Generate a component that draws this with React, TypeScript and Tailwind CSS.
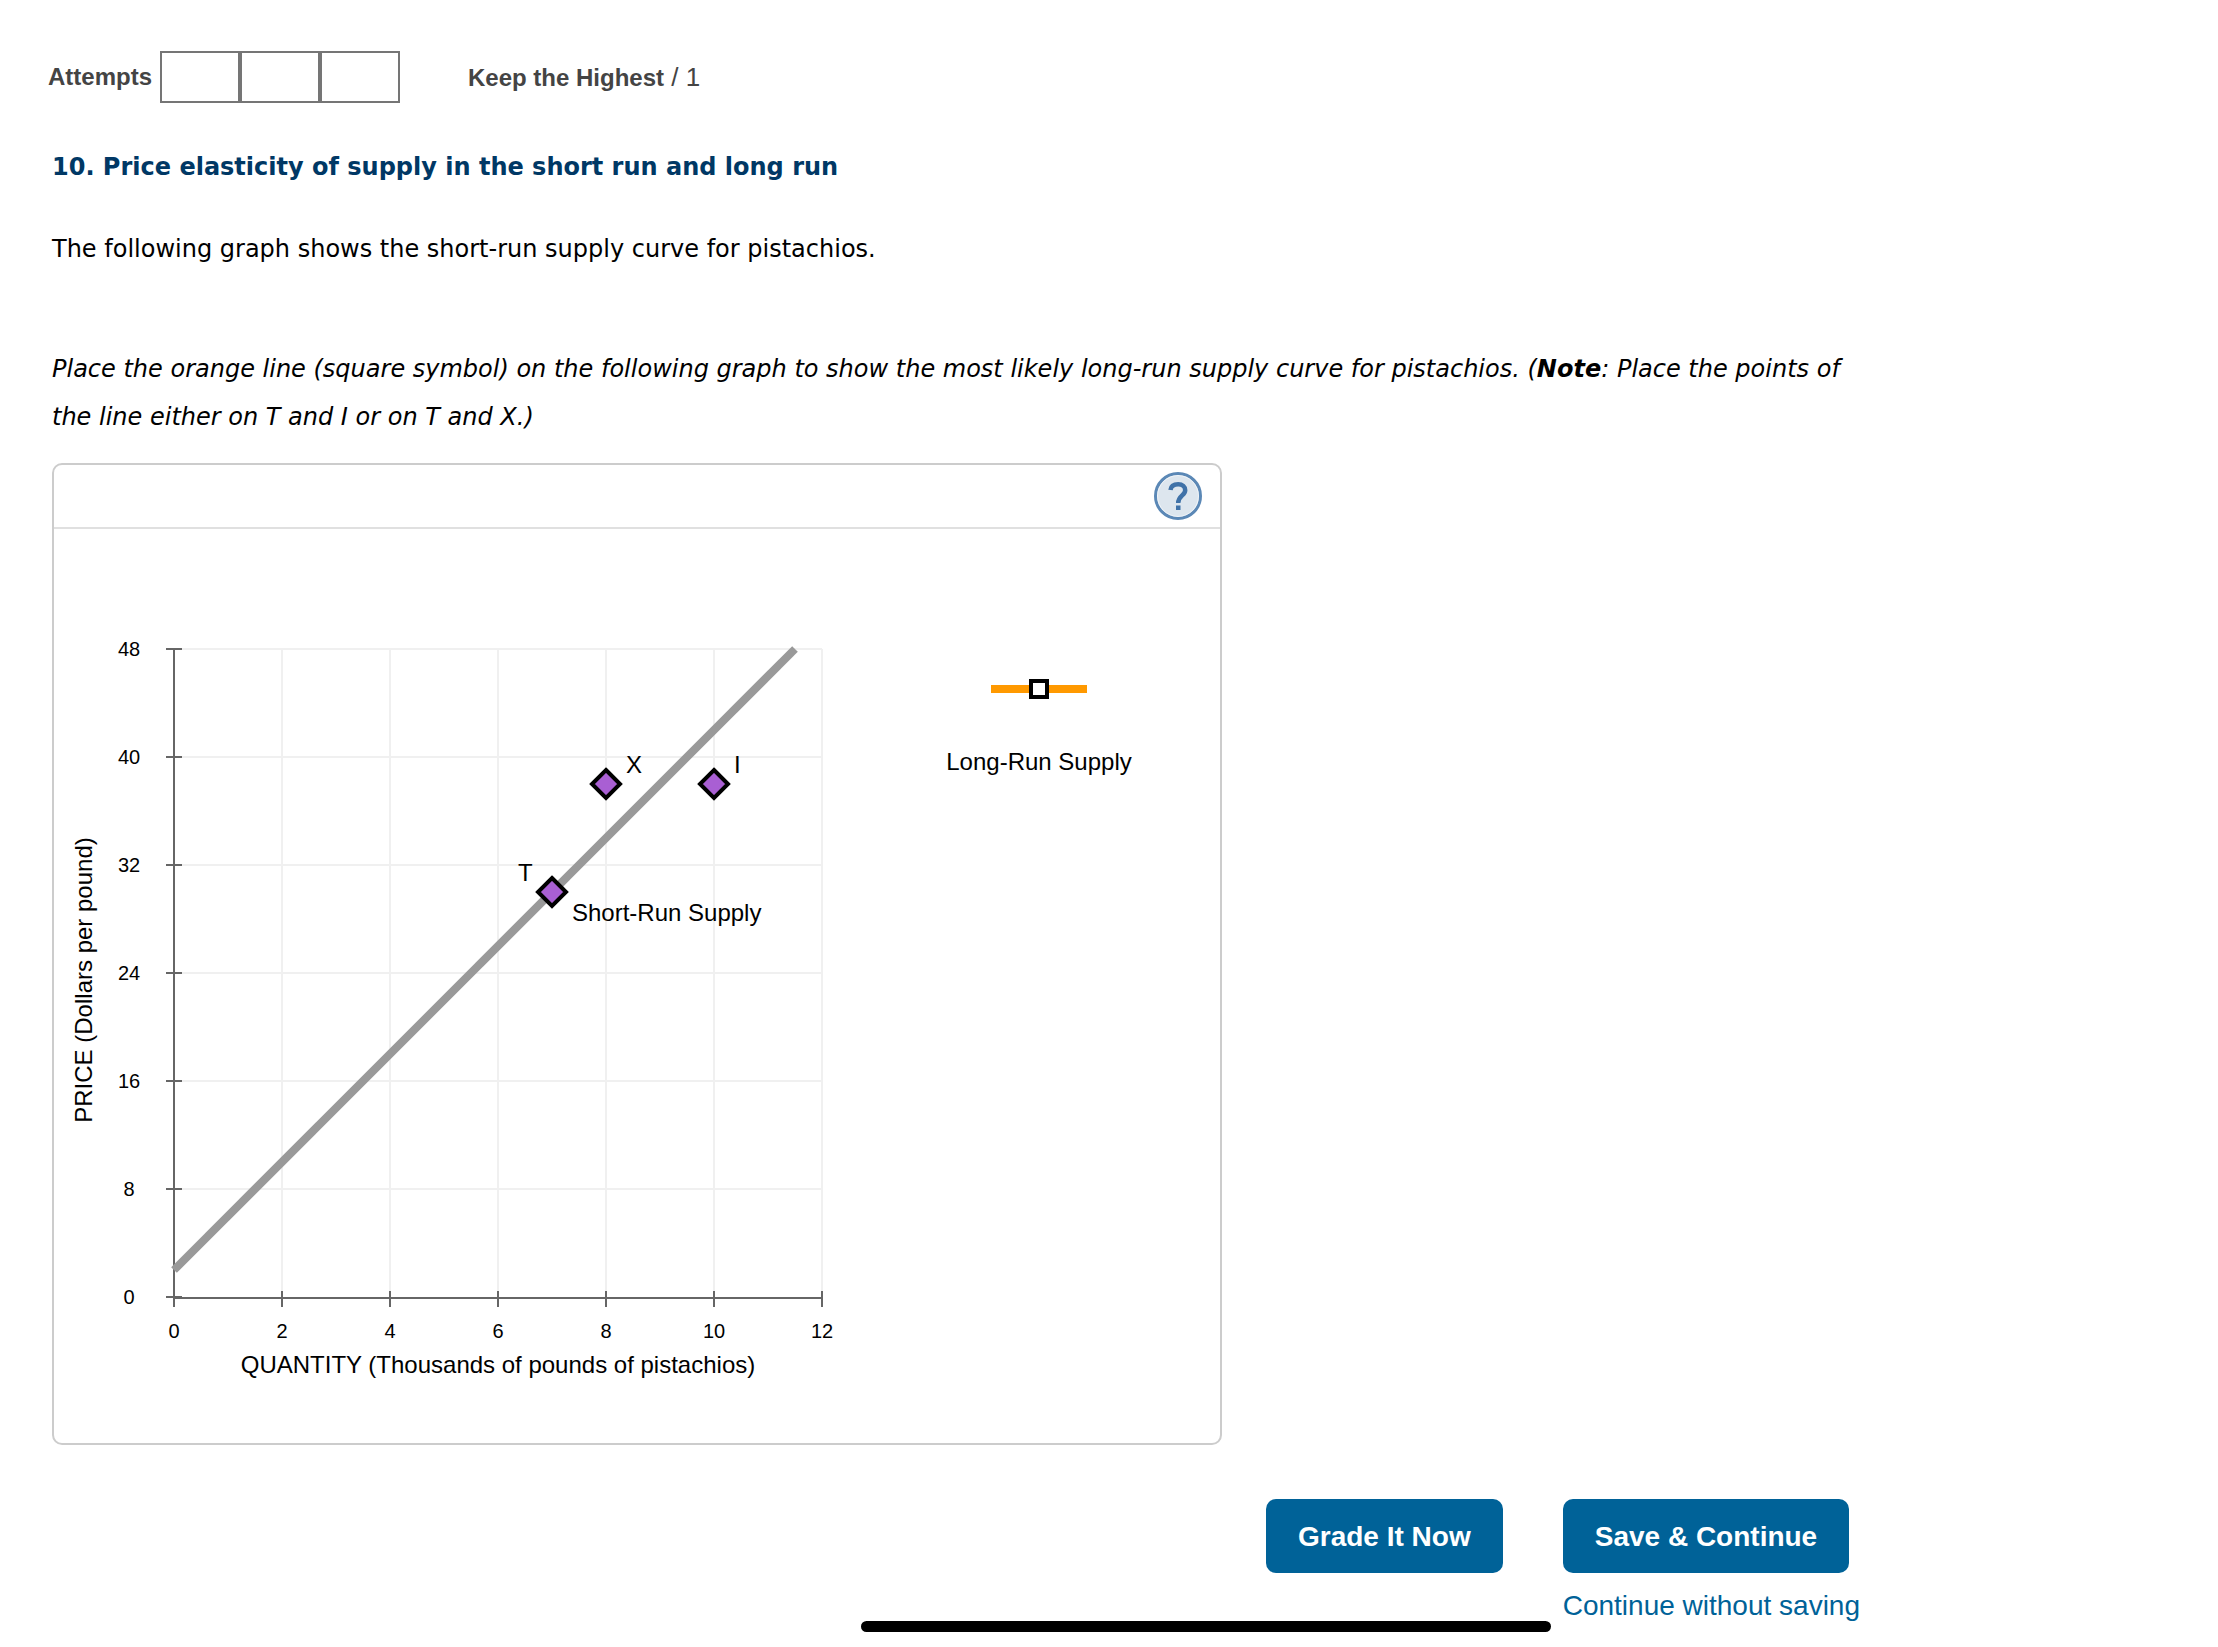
import { useState } from 'react'

const attempts = [1, 2, 3]
const quantityTicks = [0, 2, 4, 6, 8, 10, 12]
const priceTicks = [0, 8, 16, 24, 32, 40, 48]

const points = [
    { name: 'T', q: 7, p: 30, dx: -34, dy: -11 },
    { name: 'X', q: 8, p: 38, dx: 20, dy: -11 },
    { name: 'I', q: 10, p: 38, dx: 20, dy: -11 },
]

// Graph units to svg units
const toX = (q: number) => 120 + q * 54
const toY = (p: number) => 768 - p * 13.5

function SupplyGraph() {
    return (
        <svg viewBox="0 0 804 914" className="w-[804px] shrink-0 fill-black font-['Liberation_Sans',Arial,sans-serif] text-[24px]">
            {/* Grid */}
            <g stroke="#f0f0f0" strokeWidth="2">
                {quantityTicks.slice(1).map((q) => (
                    <line key={q} x1={toX(q)} y1={toY(48)} x2={toX(q)} y2={toY(0)} />
                ))}
                {priceTicks.slice(1).map((p) => (
                    <line key={p} x1={toX(0)} y1={toY(p)} x2={toX(12)} y2={toY(p)} />
                ))}
            </g>

            {/* Axes */}
            <g stroke="#666666" strokeWidth="2">
                <line x1={toX(0)} y1={toY(48)} x2={toX(0)} y2={toY(0)} />
                <line x1={toX(0)} y1={toY(0) + 1} x2={toX(12)} y2={toY(0) + 1} />
                {quantityTicks.map((q) => (
                    <line key={q} x1={toX(q)} y1={762} x2={toX(q)} y2={778} />
                ))}
                {priceTicks.map((p) => (
                    <line key={p} x1={112} y1={toY(p)} x2={128} y2={toY(p)} />
                ))}
            </g>
            <g textAnchor="middle" className="text-[20px]">
                {quantityTicks.map((q) => (
                    <text key={q} x={toX(q)} y={809}>{q}</text>
                ))}
                {priceTicks.map((p) => (
                    <text key={p} x={75} y={toY(p) + 7}>{p}</text>
                ))}
            </g>
            <text x={444} y={844} textAnchor="middle">QUANTITY (Thousands of pounds of pistachios)</text>
            <text transform="translate(38 451) rotate(-90)" textAnchor="middle">PRICE (Dollars per pound)</text>

            {/* Short-run supply */}
            <line x1={toX(0)} y1={toY(2)} x2={toX(11.5)} y2={toY(48)} stroke="#999999" strokeWidth="8" />
            <text x={518} y={392}>Short-Run Supply</text>

            {points.map(({ name, q, p, dx, dy }) => (
                <g key={name}>
                    <path
                        d={`M${toX(q)} ${toY(p) - 14}l14 14l-14 14l-14 -14z`}
                        fill="#a95fd3"
                        stroke="#000000"
                        strokeWidth="4"
                    />
                    <text x={toX(q) + dx} y={toY(p) + dy}>{name}</text>
                </g>
            ))}
        </svg>
    )
}

function HelpIcon() {
    return (
        <svg viewBox="0 0 48 48" className="h-12 w-12" fill="none">
            <circle cx="24" cy="24" r="22.5" fill="#dde6ee" stroke="#5b88b6" strokeWidth="3" />
            <circle cx="24" cy="24" r="20.5" stroke="#ffffff" strokeOpacity="0.6" strokeWidth="1" />
            <path d="M16.500 18C17 13.500 20 12.300 24.200 12.300C28.500 12.300 31.200 14.800 31.200 18.200C31.200 23.500 24.200 23.500 24.200 31" stroke="#3f72a8" strokeWidth="4.500" />
            <rect x="22" y="33.500" width="4.500" height="4.500" fill="#3f72a8" />
        </svg>
    )
}

export default function App() {
    const [selected, setSelected] = useState(false)

    return (
        <div className="bg-white px-12 pt-[51px] pb-5 font-['DejaVu_Sans',Verdana,sans-serif] text-[24px] text-black">
            <main className="max-w-[1812px]">
                {/* Attempts */}
                <div className="flex items-center font-['Liberation_Sans',Arial,sans-serif] text-[#444444]">
                    <span className="font-bold">Attempts</span>
                    <ul className="ml-2 flex">
                        {attempts.map((n) => (
                            <li key={n} className="h-[52px] w-20 border-2 border-[#757575]" />
                        ))}
                    </ul>
                    <p className="ml-17 text-[26px]">
                        <strong className="text-[24px]">Keep the Highest</strong> / 1
                    </p>
                </div>

                <div className="pl-1">
                    <h1 className="mt-10 text-[24px] leading-12 font-bold text-[#003865]">
                        10. Price elasticity of supply in the short run and long run
                    </h1>
                    <p className="mt-[34px] leading-12">
                        The following graph shows the short-run supply curve for pistachios.
                    </p>
                    <p className="mt-18 leading-12 italic">
                        Place the orange line (square symbol) on the following graph to show the most likely long-run supply curve
                        for pistachios. (<strong>Note</strong>: Place the points of the line either on T and I or on T and X.)
                    </p>

                    {/* Graph panel */}
                    <section className="mt-[22px] w-fit rounded-[10px] border-2 border-[#cccccc]">
                        <header className="flex h-16 items-center justify-end border-b-2 border-[#e0e0e0] pr-[18px]">
                            <button type="button" aria-label="Help" className="rounded-full">
                                <HelpIcon />
                            </button>
                        </header>
                        <div className="flex">
                            <SupplyGraph />
                            <div className="flex w-[362px] items-start justify-center pt-[150px]">
                                <button
                                    type="button"
                                    aria-pressed={selected}
                                    onClick={() => setSelected(!selected)}
                                    className="flex flex-col items-center gap-[46px] font-['Liberation_Sans',Arial,sans-serif]"
                                >
                                    <svg viewBox="0 0 96 20" className="h-5 w-24">
                                        <rect y="6" width="96" height="8" fill="#ff9900" />
                                        <rect x="40" y="2" width="16" height="16" fill="#ffffff" stroke="#000000" strokeWidth="4" />
                                    </svg>
                                    <span className="leading-[34px]">Long-Run Supply</span>
                                </button>
                            </div>
                        </div>
                    </section>

                    {/* Actions */}
                    <div className="mt-[54px] flex items-start justify-end gap-15 font-['Liberation_Sans',Arial,sans-serif] text-[28px]">
                        <button type="button" className="h-[74px] rounded-[10px] bg-[#006298] px-8 pt-0.5 font-bold text-white">
                            Grade It Now
                        </button>
                        <div className="flex flex-col items-start gap-3">
                            <button type="button" className="h-[74px] rounded-[10px] bg-[#006298] px-8 pt-0.5 font-bold text-white">
                                Save &amp; Continue
                            </button>
                            <a href="#continue" className="leading-[42px] text-[#006298]">Continue without saving</a>
                        </div>
                    </div>
                </div>
            </main>

            {/* Home indicator */}
            <div className="fixed bottom-[15px] left-[861px] h-[11px] w-[690px] rounded-full bg-black" />
        </div>
    )
}
